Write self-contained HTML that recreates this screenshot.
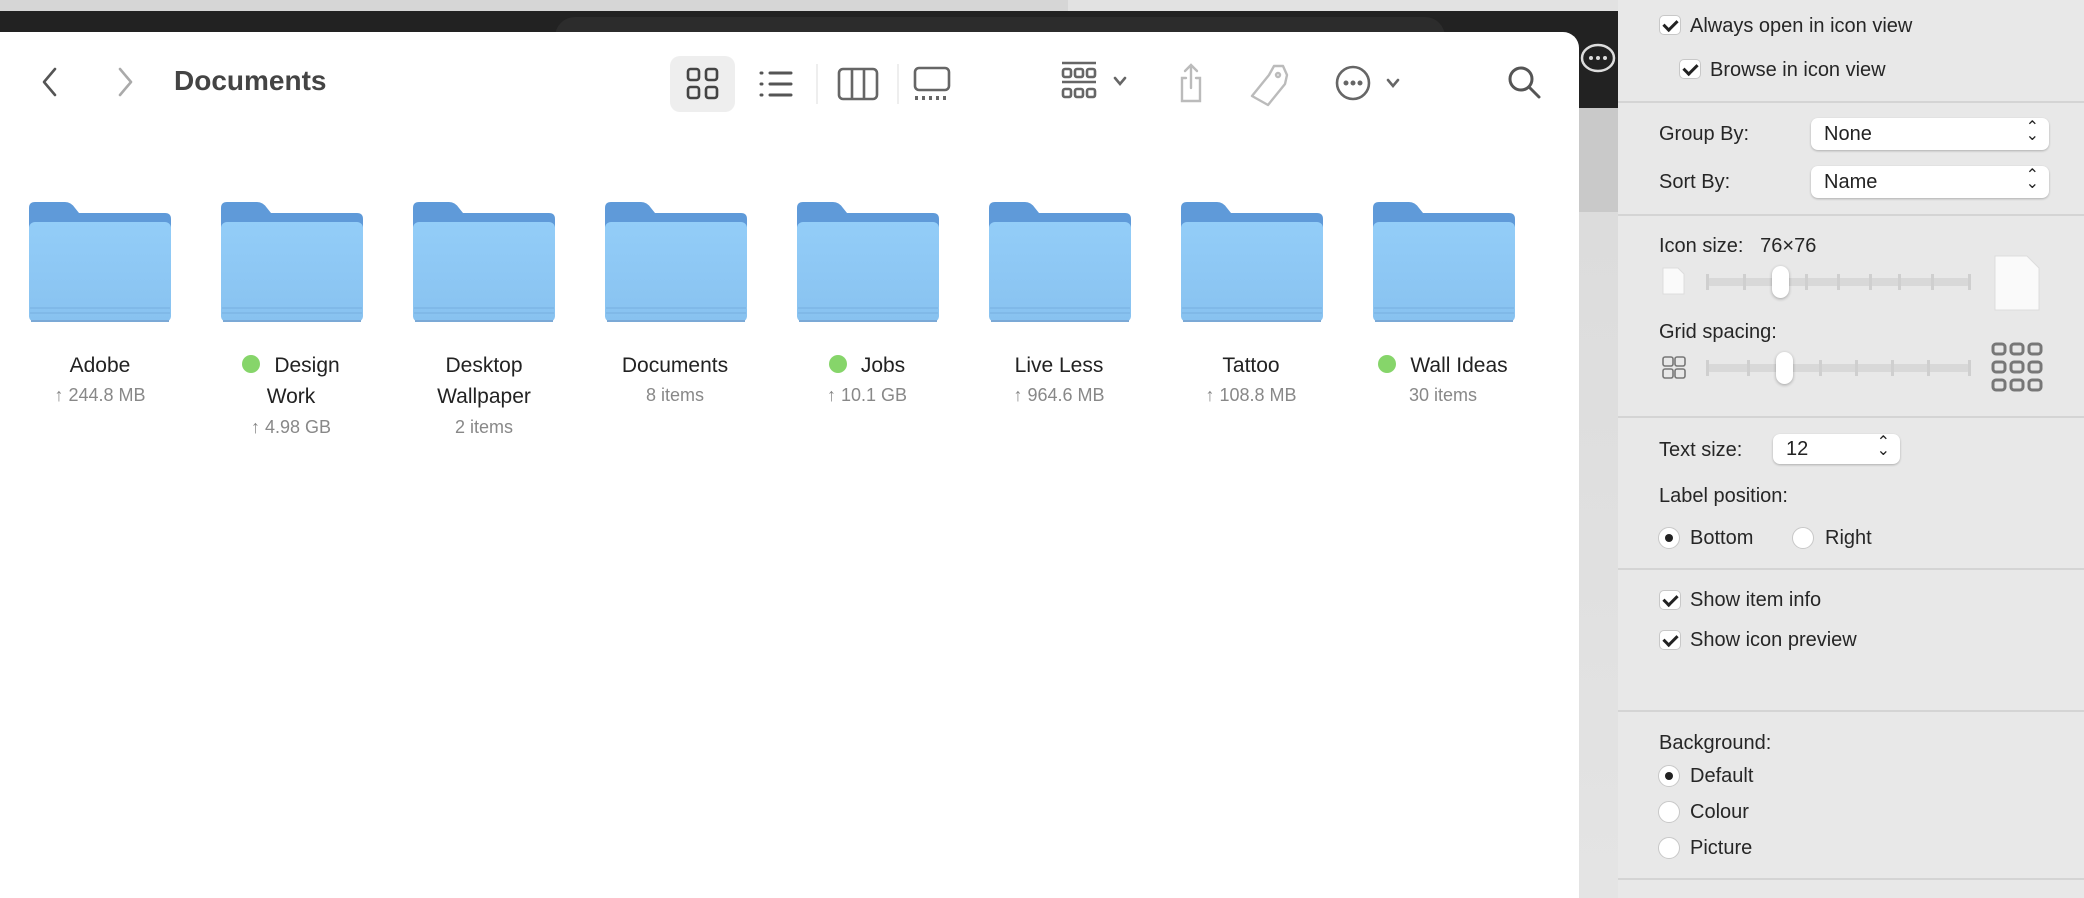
<!DOCTYPE html>
<html style="overflow:hidden;height:898px"><head><meta charset="utf-8"><style>
*{margin:0;padding:0;box-sizing:border-box}
body{width:2084px;height:898px;overflow:hidden;position:relative;background:#222;font-family:"Liberation Sans",sans-serif}
.a{position:absolute}
.top{left:0;top:0;width:2084px;height:11px;background:#d6d6d6}
.win{left:0;top:32px;width:1579px;height:866px;background:#fff;border-top-right-radius:16px}
.lbl{font-size:21px;color:#222;text-align:center;width:190px;line-height:31px}
.sub{font-size:18px;color:#888;text-align:center;width:190px;line-height:31px}
.dot{display:inline-block;width:18px;height:18px;border-radius:50%;background:#86d56a;margin-right:14px;vertical-align:-1px}
.panel{left:1618px;top:0;width:466px;height:898px;background:#e8e8e8}
.pt{font-size:20px;color:#262626;position:absolute;white-space:nowrap;line-height:24px}
.sep{position:absolute;left:0;width:466px;height:2px;background:#d4d4d4}
.cb{position:absolute;width:22px;height:20px;background:#fff;border:1px solid #c8c8c8;border-radius:5px}
.cb:after{content:"";position:absolute;left:6px;top:1px;width:6px;height:11px;border:solid #222;border-width:0 3px 3px 0;transform:rotate(45deg)}
.rd{position:absolute;width:22px;height:22px;border-radius:50%;background:#fff;border:1px solid #c8c8c8}
.rd.on:after{content:"";position:absolute;left:6px;top:6px;width:8px;height:8px;border-radius:50%;background:#222}
.pop{position:absolute;height:32px;background:#fff;border-radius:7px;box-shadow:0 1px 2px rgba(0,0,0,.25);font-size:20px;line-height:32px;padding-left:13px;color:#222}
.pop:after{content:"⌃";position:absolute;right:10px;top:-6px;font-size:16px}
.pop:before{content:"⌄";position:absolute;right:10px;top:2px;font-size:16px}
.tr{position:absolute;left:1707px;height:8px;width:263px;background:#d8d8d8;border-radius:3px}
.tk{position:absolute;width:3px;height:16px;background:#cfcfcf}
.kn{position:absolute;width:17px;height:32px;border-radius:9px;background:#fff;box-shadow:0 1px 3px rgba(0,0,0,.3)}
</style></head><body>
<div class="a top"></div>
<div class="a" style="left:1068px;top:0;width:1016px;height:11px;background:#e2e2e2"></div>
<div class="a" style="left:555px;top:17px;width:890px;height:40px;background:#2c2c2c;border-radius:20px"></div>
<div class="a" style="left:1579px;top:108px;width:39px;height:104px;background:#c9c9c9"></div>
<div class="a" style="left:1579px;top:212px;width:39px;height:686px;background:linear-gradient(#dcdcdc,#e4e4e4)"></div>
<svg class="a" style="left:1580px;top:42px" width="36" height="34"><ellipse cx="18" cy="16" rx="16" ry="13" fill="none" stroke="#ddd" stroke-width="2.5"/><circle cx="11" cy="16" r="2" fill="#ddd"/><circle cx="18" cy="16" r="2" fill="#ddd"/><circle cx="25" cy="16" r="2" fill="#ddd"/></svg>
<div class="a win"></div>
<svg class="a" style="left:40px;top:66px" width="20" height="32"><path d="M15 3L4 16L15 29" fill="none" stroke="#555" stroke-width="2.6" stroke-linecap="round" stroke-linejoin="round"/></svg>
<svg class="a" style="left:115px;top:66px" width="20" height="32"><path d="M5 3L16 16L5 29" fill="none" stroke="#aaa" stroke-width="2.6" stroke-linecap="round" stroke-linejoin="round"/></svg>
<div class="a" style="left:174px;top:65px;font-size:28px;font-weight:bold;color:#444">Documents</div>
<div class="a" style="left:670px;top:56px;width:65px;height:56px;background:#eeeeee;border-radius:10px"></div>
<svg class="a" style="left:686px;top:67px" width="34" height="34" fill="none" stroke="#444" stroke-width="2.6"><rect x="2" y="2" width="11" height="11" rx="2.5"/><rect x="20" y="2" width="11" height="11" rx="2.5"/><rect x="2" y="20" width="11" height="11" rx="2.5"/><rect x="20" y="20" width="11" height="11" rx="2.5"/></svg>
<svg class="a" style="left:758px;top:69px" width="36" height="30" fill="none" stroke="#555" stroke-width="3" stroke-linecap="round"><path d="M3 4h1M3 15h1M3 26h1M12 4h21M12 15h21M12 26h21"/></svg>
<div class="a" style="left:816px;top:64px;width:2px;height:40px;background:#eee"></div>
<svg class="a" style="left:836px;top:66px" width="44" height="36" fill="none" stroke="#666" stroke-width="2.6"><rect x="3" y="3" width="38" height="30" rx="4"/><path d="M16 3v30M28 3v30"/></svg>
<div class="a" style="left:897px;top:64px;width:2px;height:40px;background:#eee"></div>
<svg class="a" style="left:910px;top:64px" width="44" height="40" fill="none" stroke="#666" stroke-width="2.6"><rect x="5" y="4" width="34" height="22" rx="4"/><path d="M5 34h3M12 34h3M19 34h3M26 34h3M33 34h3" stroke-width="4"/></svg>
<svg class="a" style="left:1060px;top:60px" width="70" height="46" fill="none" stroke="#666" stroke-width="2.6"><path d="M2 3h34M2 22h34"/><rect x="3" y="9" width="8" height="8" rx="2"/><rect x="15" y="9" width="8" height="8" rx="2"/><rect x="27" y="9" width="8" height="8" rx="2"/><rect x="3" y="29" width="8" height="8" rx="2"/><rect x="15" y="29" width="8" height="8" rx="2"/><rect x="27" y="29" width="8" height="8" rx="2"/><path d="M55 18l5 6 5-6" stroke-linecap="round"/></svg>
<svg class="a" style="left:1176px;top:62px" width="30" height="42" fill="none" stroke="#bbb" stroke-width="2.4" stroke-linecap="round"><path d="M15 26V3M9 9l6-6 6 6M10 16H6v23h18V16h-4"/></svg>
<svg class="a" style="left:1248px;top:62px" width="42" height="46" fill="none" stroke="#bbb" stroke-width="2.4"><path d="M26 4h9l4 9-2 9L20 43 4 34 21 13z" stroke-linejoin="round"/><circle cx="30" cy="13" r="2"/></svg>
<svg class="a" style="left:1334px;top:64px" width="70" height="40" fill="none" stroke="#666" stroke-width="2.6"><circle cx="19" cy="19" r="16"/><circle cx="12" cy="19" r="1.2" fill="#666"/><circle cx="19" cy="19" r="1.2" fill="#666"/><circle cx="26" cy="19" r="1.2" fill="#666"/><path d="M54 16l5 6 5-6" stroke-linecap="round"/></svg>
<svg class="a" style="left:1506px;top:64px" width="40" height="40" fill="none" stroke="#555" stroke-width="3" stroke-linecap="round"><circle cx="15" cy="15" r="11"/><path d="M23 23l10 10"/></svg>
<svg width="0" height="0" style="position:absolute"><defs>
<linearGradient id="fg" x1="0" y1="0" x2="0" y2="1"><stop offset="0" stop-color="#93cdf8"/><stop offset="1" stop-color="#88c2f0"/></linearGradient>
<g id="fold"><path d="M6 0H36Q42 0 46 6L50 11H136Q142 11 142 17V112Q142 118 136 118H6Q0 118 0 112V6Q0 0 6 0Z" fill="#5f9ad9"/><rect x="0" y="20" width="142" height="100" rx="6" fill="url(#fg)"/><path d="M1 106h140M1 111h140" stroke="#7db6e6" stroke-width="1.5"/><path d="M2 119h138" stroke="#7ba9d6" stroke-width="2"/></g></defs></svg>
<svg class="a" style="left:29px;top:202px" width="142" height="122"><use href="#fold"/></svg>
<svg class="a" style="left:221px;top:202px" width="142" height="122"><use href="#fold"/></svg>
<svg class="a" style="left:413px;top:202px" width="142" height="122"><use href="#fold"/></svg>
<svg class="a" style="left:605px;top:202px" width="142" height="122"><use href="#fold"/></svg>
<svg class="a" style="left:797px;top:202px" width="142" height="122"><use href="#fold"/></svg>
<svg class="a" style="left:989px;top:202px" width="142" height="122"><use href="#fold"/></svg>
<svg class="a" style="left:1181px;top:202px" width="142" height="122"><use href="#fold"/></svg>
<svg class="a" style="left:1373px;top:202px" width="142" height="122"><use href="#fold"/></svg>
<div class="a lbl" style="left:5px;top:350px">Adobe</div><div class="a sub" style="left:5px;top:380px">↑ 244.8 MB</div>
<div class="a lbl" style="left:196px;top:350px"><span class="dot"></span>Design<br>Work</div><div class="a sub" style="left:196px;top:412px">↑ 4.98 GB</div>
<div class="a lbl" style="left:389px;top:350px">Desktop<br>Wallpaper</div><div class="a sub" style="left:389px;top:412px">2 items</div>
<div class="a lbl" style="left:580px;top:350px">Documents</div><div class="a sub" style="left:580px;top:380px">8 items</div>
<div class="a lbl" style="left:772px;top:350px"><span class="dot"></span>Jobs</div><div class="a sub" style="left:772px;top:380px">↑ 10.1 GB</div>
<div class="a lbl" style="left:964px;top:350px">Live Less</div><div class="a sub" style="left:964px;top:380px">↑ 964.6 MB</div>
<div class="a lbl" style="left:1156px;top:350px">Tattoo</div><div class="a sub" style="left:1156px;top:380px">↑ 108.8 MB</div>
<div class="a lbl" style="left:1348px;top:350px"><span class="dot"></span>Wall Ideas</div><div class="a sub" style="left:1348px;top:380px">30 items</div>
<div class="a panel">
<div class="cb" style="left:41px;top:15px"></div><div class="pt" style="left:72px;top:14px">Always open in icon view</div>
<div class="cb" style="left:61px;top:59px"></div><div class="pt" style="left:92px;top:58px">Browse in icon view</div>
<div class="sep" style="top:101px"></div>
<div class="pt" style="left:41px;top:122px">Group By:</div><div class="pop" style="left:193px;top:118px;width:238px">None</div>
<div class="pt" style="left:41px;top:170px">Sort By:</div><div class="pop" style="left:193px;top:166px;width:238px">Name</div>
<div class="sep" style="top:214px"></div>
<div class="pt" style="left:41px;top:234px">Icon size:&nbsp;&nbsp; 76×76</div>
<div class="pt" style="left:41px;top:320px">Grid spacing:</div>
<div class="sep" style="top:416px"></div>
<div class="pt" style="left:41px;top:438px">Text size:</div><div class="pop" style="left:155px;top:434px;width:127px;height:30px;line-height:30px">12</div>
<div class="pt" style="left:41px;top:484px">Label position:</div>
<div class="rd on" style="left:40px;top:527px"></div><div class="pt" style="left:72px;top:526px">Bottom</div>
<div class="rd" style="left:174px;top:527px"></div><div class="pt" style="left:207px;top:526px">Right</div>
<div class="sep" style="top:568px"></div>
<div class="cb" style="left:41px;top:590px"></div><div class="pt" style="left:72px;top:588px">Show item info</div>
<div class="cb" style="left:41px;top:630px"></div><div class="pt" style="left:72px;top:628px">Show icon preview</div>
<div class="sep" style="top:710px"></div>
<div class="pt" style="left:41px;top:731px">Background:</div>
<div class="rd on" style="left:40px;top:765px"></div><div class="pt" style="left:72px;top:764px">Default</div>
<div class="rd" style="left:40px;top:801px"></div><div class="pt" style="left:72px;top:800px">Colour</div>
<div class="rd" style="left:40px;top:837px"></div><div class="pt" style="left:72px;top:836px">Picture</div>
<div class="sep" style="top:878px"></div>
</div>
<svg class="a" style="left:1661px;top:266px" width="26" height="32"><path d="M2 2h15l6 6v20H2z" fill="#fafafa" stroke="#ddd"/></svg>
<svg class="a" style="left:1993px;top:254px" width="50" height="60"><path d="M2 2h32l12 12v42H2z" fill="#fafafa" stroke="#ddd"/></svg>
<div class="tr" style="top:278px"></div>
<div class="tk" style="left:1706px;top:274px"></div><div class="tk" style="left:1743px;top:274px"></div><div class="tk" style="left:1805px;top:274px"></div><div class="tk" style="left:1837px;top:274px"></div><div class="tk" style="left:1869px;top:274px"></div><div class="tk" style="left:1898px;top:274px"></div><div class="tk" style="left:1931px;top:274px"></div><div class="tk" style="left:1968px;top:274px"></div>
<div class="kn" style="left:1772px;top:266px"></div>
<svg class="a" style="left:1662px;top:356px" width="26" height="26" fill="none" stroke="#777" stroke-width="1.6"><rect x="1" y="1" width="10" height="9" rx="2"/><rect x="13" y="1" width="10" height="9" rx="2"/><rect x="1" y="13" width="10" height="9" rx="2"/><rect x="13" y="13" width="10" height="9" rx="2"/></svg>
<svg class="a" style="left:1991px;top:342px" width="54" height="54" fill="none" stroke="#777" stroke-width="3"><rect x="2" y="2" width="12" height="10" rx="3"/><rect x="20" y="2" width="12" height="10" rx="3"/><rect x="38" y="2" width="12" height="10" rx="3"/><rect x="2" y="20" width="12" height="10" rx="3"/><rect x="20" y="20" width="12" height="10" rx="3"/><rect x="38" y="20" width="12" height="10" rx="3"/><rect x="2" y="38" width="12" height="10" rx="3"/><rect x="20" y="38" width="12" height="10" rx="3"/><rect x="38" y="38" width="12" height="10" rx="3"/></svg>
<div class="tr" style="top:364px"></div>
<div class="tk" style="left:1706px;top:360px"></div><div class="tk" style="left:1747px;top:360px"></div><div class="tk" style="left:1819px;top:360px"></div><div class="tk" style="left:1855px;top:360px"></div><div class="tk" style="left:1891px;top:360px"></div><div class="tk" style="left:1927px;top:360px"></div><div class="tk" style="left:1968px;top:360px"></div>
<div class="kn" style="left:1776px;top:352px"></div>
</body></html>
